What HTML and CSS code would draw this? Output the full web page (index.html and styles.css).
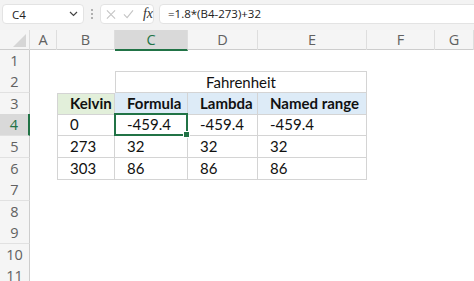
FILE: index.html
```html
<!DOCTYPE html>
<html lang="en">
<head>
<meta charset="UTF-8">
<title>Kelvin to Fahrenheit</title>
<link rel="stylesheet" href="styles.css">
</head>
<body>

<div class="toolbar">
    <div class="namebox">
        <span>C4</span>
        <svg class="chevron" width="9" height="6" viewBox="0 0 9 6"><path d="M1 1l3.5 3.5L8 1" fill="none" stroke="#444" stroke-width="1.2"/></svg>
    </div>
    <svg class="grip" width="4" height="12" viewBox="0 0 4 12">
        <circle cx="2" cy="2" r="1" fill="#9a9a9a"/>
        <circle cx="2" cy="6" r="1" fill="#9a9a9a"/>
        <circle cx="2" cy="10" r="1" fill="#9a9a9a"/>
    </svg>
    <div class="fxbox">
        <svg width="11" height="11" viewBox="0 0 11 11"><path d="M1 1l9 9M10 1l-9 9" stroke="#c4c4c4" stroke-width="1.2"/></svg>
        <svg width="12" height="10" viewBox="0 0 12 10"><path d="M1 5.5l3.5 3.5L11 1" fill="none" stroke="#c4c4c4" stroke-width="1.2"/></svg>
        <span class="fx">fx</span>
    </div>
    <div class="formula">=1.8*(B4-273)+32</div>
</div>

<div class="sheet">
    <div class="row heads">
        <div class="corner"></div>
        <div class="ch">A</div>
        <div class="ch">B</div>
        <div class="ch sel">C</div>
        <div class="ch">D</div>
        <div class="ch">E</div>
        <div class="ch">F</div>
        <div class="ch">G</div>
    </div>
    <div class="row"><div class="rh">1</div></div>
    <div class="row tall">
        <div class="rh">2</div>
        <div class="cell merged">Fahrenheit</div>
    </div>
    <div class="row">
        <div class="rh">3</div>
        <div></div>
        <div class="cell first top hd kelvin">Kelvin</div>
        <div class="cell hd">Formula</div>
        <div class="cell hd">Lambda</div>
        <div class="cell hd">Named range</div>
    </div>
    <div class="row tall">
        <div class="rh sel">4</div>
        <div></div>
        <div class="cell first">0</div>
        <div class="cell active">-459.4</div>
        <div class="cell">-459.4</div>
        <div class="cell">-459.4</div>
    </div>
    <div class="row tall">
        <div class="rh">5</div>
        <div></div>
        <div class="cell first">273</div>
        <div class="cell">32</div>
        <div class="cell">32</div>
        <div class="cell">32</div>
    </div>
    <div class="row">
        <div class="rh">6</div>
        <div></div>
        <div class="cell first">303</div>
        <div class="cell">86</div>
        <div class="cell">86</div>
        <div class="cell">86</div>
    </div>
    <div class="row tall"><div class="rh">7</div></div>
    <div class="row"><div class="rh">8</div></div>
    <div class="row tall"><div class="rh">9</div></div>
    <div class="row"><div class="rh">10</div></div>
    <div class="row tall"><div class="rh">11</div></div>
</div>

</body>
</html>
```

FILE: styles.css
```css
* {
    box-sizing: border-box;
}
body {
    margin: 0;
    background: #fff;
    font-family: "Open Sans", "Noto Sans", sans-serif;
    overflow: hidden;
}

/* formula bar */
.toolbar {
    display: flex;
    align-items: flex-start;
    height: 30px;
    padding: 4px 0 0 2px;
    background: #f3f3f3;
    white-space: nowrap;
}
.namebox,
.fxbox,
.formula {
    height: 20px;
    background: #fff;
    border: 1px solid #e3e3e3;
    border-radius: 4px;
}
.namebox {
    width: 82px;
    display: flex;
    align-items: center;
    justify-content: space-between;
    padding: 0 5px 0 9px;
    font-size: 11.5px;
    color: #222;
}
.grip {
    margin: 4px 6px 0 6px;
}
.fxbox {
    width: 54px;
    display: flex;
    align-items: center;
    padding: 0 0 0 5px;
    gap: 7px;
}
.fx {
    font-family: "Liberation Serif", serif;
    font-style: italic;
    font-size: 14px;
    color: #333;
    margin-left: 2px;
}
.formula {
    flex: 1;
    margin: 0 -10px 0 5px;
    padding-left: 8px;
    font-size: 11.5px;
    line-height: 18px;
    color: #222;
}

/* grid */
.row {
    display: grid;
    grid-template-columns: 30px 27px 58px 73px 70px 109px 68px 1fr;
    height: 21px;
}
.row.tall {
    height: 22px;
}
.heads {
    height: 20px;
    background: #f5f5f5;
    border-bottom: 1px solid #cdcdcd;
}
.corner {
    position: relative;
    border-right: 1px solid #dcdcdc;
}
.corner::after {
    content: "";
    position: absolute;
    right: 3px;
    bottom: 3px;
    border-style: solid;
    border-width: 0 0 13px 13px;
    border-color: transparent transparent #d6d6d6 transparent;
}
.ch {
    text-align: center;
    font-size: 14.5px;
    line-height: 19px;
    color: #616161;
    border-right: 1px solid #dedede;
}
.ch.sel {
    background: #d9d9d9;
    color: #217346;
    border-bottom: 2px solid #217346;
    margin-bottom: -1px;
}
.rh {
    background: #f5f5f5;
    border-right: 1px solid #cdcdcd;
    border-bottom: 1px solid #e1e1e1;
    text-align: center;
    font-size: 14.5px;
    line-height: 21px;
    color: #616161;
}
.rh.sel {
    background: #d9d9d9;
    color: #217346;
    border-right: 2px solid #217346;
}

/* table */
.cell {
    padding-left: 12px;
    font-family: Lato, "Open Sans", sans-serif;
    font-size: 15px;
    line-height: 20px;
    color: #111;
    white-space: nowrap;
    border-right: 1px solid #d4d4d4;
    border-bottom: 1px solid #d4d4d4;
}
.cell.first {
    border-left: 1px solid #d4d4d4;
}
.cell.top {
    border-top: 1px solid #d4d4d4;
    line-height: 19px;
}
.merged {
    grid-column: 4 / 7;
    border-top: 1px solid #d4d4d4;
    border-left: 1px solid #d4d4d4;
    padding-left: 0;
    text-align: center;
    line-height: 20px;
}
.hd {
    font-weight: bold;
    background: #ddebf7;
}
.hd.kelvin {
    background: #e2efda;
}
.active {
    position: relative;
    border: 2px solid #217346;
    margin: -1px 0 0 -1px;
    padding-left: 11px;
    line-height: 19px;
}
.active::after {
    content: "";
    position: absolute;
    right: -4px;
    bottom: -4px;
    width: 5px;
    height: 5px;
    background: #217346;
    border: 1px solid #fff;
}
```
